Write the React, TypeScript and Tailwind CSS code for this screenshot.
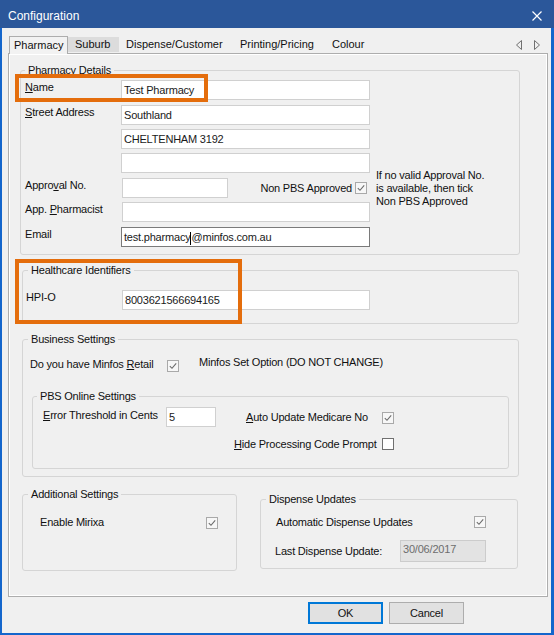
import React from "react";

type Kids = { children?: React.ReactNode; className?: string };

function Check({ checked = false, className = "" }: { checked?: boolean; className?: string }) {
    return (
        <span
            className={
                "flex h-[12px] w-[12px] shrink-0 items-center justify-center border " +
                (checked ? "border-[#a9a9a9] bg-[#f7f7f7] " : "border-[#707070] bg-white ") +
                className
            }
        >
            {checked && (
                <svg width="8" height="8" viewBox="0 0 8 8">
                    <path d="M0.8 4.1 L3 6.3 L7.2 1.3" fill="none" stroke="#6b6b6b" strokeWidth="1.1" />
                </svg>
            )}
        </span>
    );
}

function Group({ title, className = "", legend = "ml-[4px]", children }: Kids & { title: string; legend?: string }) {
    return (
        <fieldset className={"shrink-0 rounded-[3px] border border-[#d5d5d5] " + className}>
            <legend className={"px-[3px] leading-[14px] " + legend}>{title}</legend>
            {children}
        </fieldset>
    );
}

function Box({ className = "", children }: Kids) {
    return (
        <div className={"h-[20px] shrink-0 overflow-hidden whitespace-nowrap border bg-white pl-[2px] leading-[18px] text-[#1a1a1a] " + className}>
            {children}
        </div>
    );
}

function Label({ className = "", children }: Kids) {
    return <div className={"shrink-0 whitespace-nowrap leading-[14px] " + className}>{children}</div>;
}

export default function App() {
    return (
        <div className="relative h-[635px] w-[554px] overflow-hidden bg-[#f0f0f0] font-['Liberation_Sans',Arial,sans-serif] text-[11px] tracking-[-0.2px] text-[#111]">
            {/* title bar */}
            <div className="flex h-[28px] items-center justify-between bg-[#2b579a] pl-[8px] pr-[12px] pt-[3px] text-[12px] tracking-normal text-white">
                <span>Configuration</span>
                <svg width="10" height="10" viewBox="0 0 10 10">
                    <path d="M0.5 0.5 L9.5 9.5 M9.5 0.5 L0.5 9.5" stroke="#fff" strokeWidth="1.2" />
                </svg>
            </div>

            <div className="flex h-[607px] flex-col border-b-2 border-l-2 border-r-[3px] border-[#1466cc]">
                {/* tabs */}
                <div className="mt-[8px] flex h-[17px] items-end pl-[7px] tracking-normal">
                    <div className="relative z-10 -mb-px h-[18px] w-[59px] border border-b-0 border-[#adadad] bg-[#f2f2f2] pl-[4px] leading-[16px]">
                        Pharmacy
                    </div>
                    <div className="mb-px h-[15px] w-[51px] bg-[#dcdcdc] pl-[7px] leading-[15px]">Suburb</div>
                    <div className="mb-px h-[15px] w-[113px] pl-[7px] leading-[15px]">Dispense/Customer</div>
                    <div className="mb-px h-[15px] w-[93px] pl-[8px] leading-[15px]">Printing/Pricing</div>
                    <div className="mb-px h-[15px] pl-[7px] leading-[15px]">Colour</div>
                    <div className="mb-[3px] ml-auto mr-[11px] flex items-center gap-[12px]">
                        <svg width="6" height="10" viewBox="0 0 6 10">
                            <polygon points="5.5,0.5 0.5,5 5.5,9.5" fill="none" stroke="#707070" />
                        </svg>
                        <svg width="6" height="10" viewBox="0 0 6 10">
                            <polygon points="0.5,0.5 5.5,5 0.5,9.5" fill="none" stroke="#707070" />
                        </svg>
                    </div>
                </div>

                {/* tab page */}
                <div className="ml-[6px] flex h-[544px] w-[540px] flex-col border border-[#adadad] pl-[11px] pt-[9px] shadow-[inset_0_0_0_1px_#fff]">
                    <Group title="Pharmacy Details" className="w-[500px] pb-[7px] pt-[3px]">
                        <div className="flex h-[20px] items-start">
                            <Label className="w-[100px] pl-[4px]">
                                <u>N</u>ame
                            </Label>
                            <Box className="w-[249px] border-[#d0d0d0]">Test Pharmacy</Box>
                        </div>
                        <div className="mt-[5px] flex h-[20px] items-start">
                            <Label className="w-[100px] pl-[4px]">
                                <u>S</u>treet Address
                            </Label>
                            <Box className="w-[249px] border-[#d0d0d0]">Southland</Box>
                        </div>
                        <div className="mt-[4px] flex h-[20px] items-start">
                            <div className="w-[100px] shrink-0" />
                            <Box className="w-[249px] border-[#d0d0d0]">CHELTENHAM 3192</Box>
                        </div>
                        <div className="mt-[4px] flex h-[20px] items-start">
                            <div className="w-[100px] shrink-0" />
                            <Box className="w-[249px] border-[#d0d0d0]" />
                        </div>
                        <div className="mt-[5px] flex h-[20px] items-start">
                            <Label className="w-[101px] pl-[4px]">
                                Appro<u>v</u>al No.
                            </Label>
                            <Box className="w-[106px] border-[#d0d0d0]" />
                            <div className="flex w-[139px] shrink-0 items-center justify-end gap-[3px] self-center">
                                <span className="whitespace-nowrap leading-[14px]">Non PBS Approved</span>
                                <Check checked />
                            </div>
                            <div className="ml-[9px] shrink-0 self-center whitespace-nowrap leading-[13px]">
                                If no valid Approval No.
                                <br />
                                is available, then tick
                                <br />
                                Non PBS Approved
                            </div>
                        </div>
                        <div className="mt-[4px] flex h-[20px] items-start">
                            <Label className="w-[101px] pl-[4px]">
                                App. <u>P</u>harmacist
                            </Label>
                            <Box className="w-[248px] border-[#d0d0d0]" />
                        </div>
                        <div className="mt-[5px] flex h-[20px] items-start">
                            <Label className="w-[100px] pl-[4px]">Email</Label>
                            <Box className="w-[249px] border-[#7a7a7a]">
                                test.pharmacy
                                <span className="inline-block h-[13px] w-px bg-black align-middle" />
                                @minfos.com.au
                            </Box>
                        </div>
                    </Group>

                    <Group title="Healthcare Identifiers" legend="ml-[5px]" className="ml-[2px] mt-[8px] w-[497px] pb-[13px] pt-[13px]">
                        <div className="flex h-[20px] items-start">
                            <Label className="w-[99px] pl-[3px]">HPI-O</Label>
                            <Box className="w-[248px] border-[#d0d0d0]">8003621566694165</Box>
                        </div>
                    </Group>

                    <Group title="Business Settings" legend="ml-[5px]" className="ml-[2px] mt-[8px] w-[497px] pb-[7px] pt-[11px]">
                        <div className="flex h-[16px] items-start">
                            <Label className="w-[144px] pl-[7px]">
                                Do you have Minfos <u>R</u>etail
                            </Label>
                            <Check checked className="mt-[3px]" />
                            <Label className="ml-[20px] mt-[-2px]">Minfos Set Option (DO NOT CHANGE)</Label>
                        </div>
                        <Group title="PBS Online Settings" className="ml-[9px] mt-[16px] w-[477px] pb-[17px] pt-[4px]">
                            <div className="flex h-[20px] items-start">
                                <Label className="mt-[1px] w-[133px] pl-[10px]">
                                    <u>E</u>rror Threshold in Cents
                                </Label>
                                <Box className="w-[50px] border-[#d0d0d0]">5</Box>
                                <Label className="ml-[30px] mt-[3px] w-[136px]">
                                    <u>A</u>uto Update Medicare No
                                </Label>
                                <Check checked className="mt-[5px]" />
                            </div>
                            <div className="mt-[10px] flex h-[14px] items-start pl-[201px]">
                                <Label className="w-[148px]">
                                    <u>H</u>ide Processing Code Prompt
                                </Label>
                                <Check className="mt-[1px]" />
                            </div>
                        </Group>
                    </Group>

                    <div className="ml-[2px] mt-[10px] flex items-start">
                        <Group title="Additional Settings" legend="ml-[5px]" className="h-[84px] w-[215px] pt-[14px]">
                            <div className="flex h-[14px] items-start">
                                <Label className="w-[183px] pl-[17px]">Enable Mirixa</Label>
                                <Check checked className="mt-[2px]" />
                            </div>
                        </Group>
                        <Group title="Dispense Updates" legend="ml-[5px]" className="ml-[23px] mt-[5px] h-[77px] w-[258px] pt-[9px]">
                            <div className="flex h-[14px] items-start">
                                <Label className="w-[213px] pl-[15px]">Automatic Dispense Updates</Label>
                                <Check checked className="mt-[1px]" />
                            </div>
                            <div className="mt-[11px] flex items-start">
                                <Label className="mt-[4px] w-[139px] pl-[14px]">Last Dispense Update:</Label>
                                <div className="h-[22px] w-[86px] shrink-0 border border-[#cccccc] bg-[#e3e3e3] pl-[2px] pt-[1px] leading-[14px] text-[#6d6d6d]">
                                    30/06/2017
                                </div>
                            </div>
                        </Group>
                    </div>
                </div>

                {/* dialog buttons */}
                <div className="ml-[306px] mt-[5px] flex gap-[6px]">
                    <button className="h-[22px] w-[75px] border-2 border-[#0078d7] bg-[#e1e1e1]">OK</button>
                    <button className="h-[22px] w-[75px] border border-[#adadad] bg-[#e1e1e1]">Cancel</button>
                </div>
            </div>

            {/* orange highlight frames */}
            <div className="absolute left-[15px] top-[74px] h-[28px] w-[193px] border-4 border-[#e46d0c]" />
            <div className="absolute left-[15px] top-[259px] h-[65px] w-[227px] border-4 border-[#e46d0c]" />
        </div>
    );
}
